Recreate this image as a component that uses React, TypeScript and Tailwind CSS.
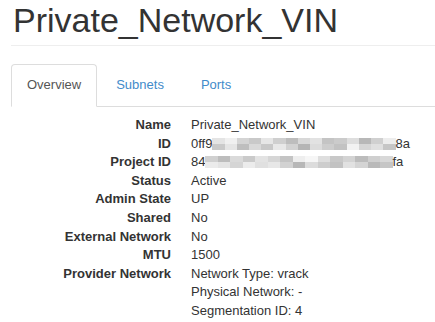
const font = { fontFamily: '"Liberation Sans", Arial, sans-serif' };

// shades for the pixelated (redacted) parts of the ids
const idShades = [
  "#e4e4e4", "#f0f0f0", "#d4d4d4", "#c9c9c9", "#e6e6e6", "#cfcfcf", "#bdbdbd", "#d8d8d8",
  "#e2e2e2", "#c4c4c4", "#cbcbcb", "#dedede", "#b8b8b8", "#d0d0d0", "#ededed", "#c6c6c6",
  "#e0e0e0", "#d6d6d6", "#f2f2f2", "#c2c2c2", "#cdcdcd", "#dcdcdc", "#b5b5b5", "#d2d2d2",
  "#e8e8e8", "#c8c8c8", "#d9d9d9", "#bebebe", "#e5e5e5", "#cacaca",
];
const projectShades = [
  "#d0d0d0", "#bdbdbd", "#dadada", "#cacaca", "#e3e3e3", "#d6d6d6", "#c4c4c4", "#eeeeee",
  "#f6f6f6", "#dedede", "#c8c8c8", "#d3d3d3", "#bcbcbc", "#cfcfcf", "#d8d8d8", "#c6c6c6",
  "#b9b9b9", "#d4d4d4", "#e1e1e1", "#c2c2c2", "#cdcdcd", "#dcdcdc", "#b7b7b7", "#d2d2d2",
  "#e7e7e7", "#e0e0e0", "#ececec", "#d5d5d5", "#e4e4e4", "#ebebeb",
];

function Blur({ shades, width }: { shades: string[]; width: number }) {
  const half = Math.ceil(shades.length / 2);
  const rows = [shades.slice(0, half), shades.slice(half).reverse()];
  return (
    <span className="inline-flex flex-col align-middle" style={{ width }}>
      {rows.map((row, r) => (
        <span key={r} className="flex h-[6px]">
          {row.map((c, i) => (
            <span key={i} className="flex-1" style={{ backgroundColor: c }} />
          ))}
        </span>
      ))}
    </span>
  );
}

const rows: { label: string; value: React.ReactNode }[] = [
  { label: "Name", value: "Private_Network_VIN" },
  {
    label: "ID",
    value: (
      <span className="inline-flex items-center">
        0ff9
        <Blur shades={idShades} width={183} />
        8a
      </span>
    ),
  },
  {
    label: "Project ID",
    value: (
      <span className="inline-flex items-center">
        84
        <Blur shades={projectShades} width={187} />
        fa
      </span>
    ),
  },
  { label: "Status", value: "Active" },
  { label: "Admin State", value: "UP" },
  { label: "Shared", value: "No" },
  { label: "External Network", value: "No" },
  { label: "MTU", value: "1500" },
  {
    label: "Provider Network",
    value: (
      <>
        <div>Network Type: vrack</div>
        <div>Physical Network: -</div>
        <div>Segmentation ID: 4</div>
      </>
    ),
  },
];

export default function App() {
  return (
    <div className="h-[322px] w-[435px] overflow-hidden bg-white pl-[11px] text-[#333]" style={font}>
      <h1 className="pl-[2px] text-[34px] leading-[40px] font-normal text-[#333]">Private_Network_VIN</h1>
      <div className="mt-[5px] border-b border-[#eee]" />

      <ul className="mt-[18px] flex border-b border-[#ddd] text-[13px] leading-[20px]">
        <li className="-mb-px rounded-t-[4px] border border-[#ddd] border-b-white bg-white px-[15px] py-[10px] text-[#555]">
          Overview
        </li>
        <li className="ml-[2px] border border-transparent px-[16px] py-[10px] text-[#428bca]">Subnets</li>
        <li className="ml-[2px] border border-transparent px-[17px] py-[10px] text-[#428bca]">Ports</li>
      </ul>

      <dl className="mt-[9px] text-[13px] leading-[18.6px]">
        {rows.map((r) => (
          <div key={r.label} className="flex">
            <dt className="w-[160px] shrink-0 text-right font-bold">{r.label}</dt>
            <dd className="ml-[20px]">{r.value}</dd>
          </div>
        ))}
      </dl>
    </div>
  );
}
